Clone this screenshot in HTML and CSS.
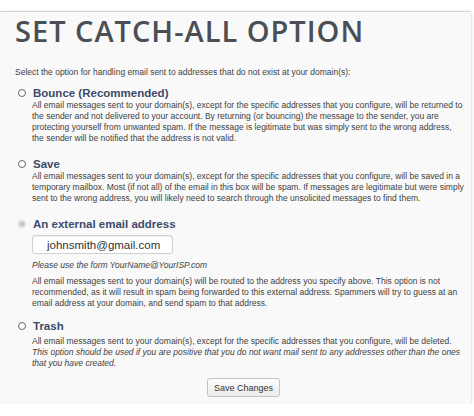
FILE: index.html
```html
<!DOCTYPE html>
<html lang="en">
<head>
<meta charset="utf-8">
<title>Set Catch-All Option</title>
<link rel="stylesheet" href="styles.css">
</head>
<body>
<div class="panel">
  <h1 class="title">SET CATCH-ALL OPTION</h1>
  <p class="intro">Select the option for handling email sent to addresses that do not exist at your domain(s):</p>

  <div class="option option-bounce">
    <label class="option-head"><input type="radio" name="catchall" class="radio"><span>Bounce (Recommended)</span></label>
    <p class="desc">All email messages sent to your domain(s), except for the specific addresses that you configure, will be returned to the sender and not delivered to your account. By returning (or bouncing) the message to the sender, you are protecting yourself from unwanted spam. If the message is legitimate but was simply sent to the wrong address, the sender will be notified that the address is not valid.</p>
  </div>

  <div class="option option-save">
    <label class="option-head"><input type="radio" name="catchall" class="radio"><span>Save</span></label>
    <p class="desc">All email messages sent to your domain(s), except for the specific addresses that you configure, will be saved in a temporary mailbox. Most (if not all) of the email in this box will be spam. If messages are legitimate but were simply sent to the wrong address, you will likely need to search through the unsolicited messages to find them.</p>
  </div>

  <div class="option option-external">
    <label class="option-head"><input type="radio" name="catchall" class="radio radio-muted" checked><span>An external email address</span></label>
    <div class="field-wrap"><input type="text" class="field" value="johnsmith@gmail.com"></div>
    <p class="hint">Please use the form YourName@YourISP.com</p>
    <p class="desc">All email messages sent to your domain(s) will be routed to the address you specify above. This option is not recommended, as it will result in spam being forwarded to this external address. Spammers will try to guess at an email address at your domain, and send spam to that address.</p>
  </div>

  <div class="option option-trash">
    <label class="option-head"><input type="radio" name="catchall" class="radio"><span>Trash</span></label>
    <p class="desc">All email messages sent to your domain(s), except for the specific addresses that you configure, will be deleted. <em>This option should be used if you are positive that you do not want mail sent to any addresses other than the ones that you have created.</em></p>
  </div>

  <div class="actions"><button type="button" class="btn">Save Changes</button></div>
</div>
</body>
</html>
```

FILE: styles.css
```css
html, body {
  margin: 0;
  padding: 0;
  background: #ffffff;
}

body {
  font-family: "Liberation Sans", Arial, sans-serif;
  color: #424242;
  padding-top: 11px;
}

.panel {
  width: 471px;
  height: 393px;
  box-sizing: border-box;
  background: #f9f9f9;
  border-top: 1px solid #d6d6d6;
  box-shadow: 0 1px 3px rgba(0, 0, 0, 0.22);
  padding: 2px 6px 0 15px;
}

.title {
  margin: 0;
  font-family: "Open Sans", sans-serif;
  font-weight: 600;
  font-size: 29px;
  line-height: 34px;
  letter-spacing: 1px;
  color: #4a4f55;
}

.intro {
  margin: 19px 0 0;
  font-size: 8.5px;
  line-height: 11px;
}

.option-bounce { margin-top: 8px; }
.option-save { margin-top: 13px; }
.option-external { margin-top: 13px; }
.option-trash { margin-top: 10px; }

.option-head {
  display: flex;
  align-items: center;
  gap: 7px;
  padding-left: 3px;
  font-size: 11.5px;
  font-weight: bold;
  color: #3d4a6b;
  line-height: 14px;
}

.radio {
  appearance: none;
  -webkit-appearance: none;
  margin: 0;
  width: 8px;
  height: 8px;
  border: 1px solid #666;
  border-radius: 50%;
  background: #fff;
  box-sizing: border-box;
}

.radio-muted {
  border-color: #cfcfcf;
  background: radial-gradient(circle, #c4c4c4 0 1.8px, #e8e8e8 2.3px);
}

.desc {
  margin: 0 0 0 17px;
  font-size: 8.5px;
  line-height: 11px;
}

.option-trash .desc {
  margin-top: 3px;
}

.field-wrap {
  margin: 4px 0 0 17px;
}

.field {
  display: block;
  width: 141px;
  height: 19px;
  box-sizing: border-box;
  border: 1px solid #cfcfcf;
  border-radius: 3px;
  background: #fff;
  box-shadow: inset 0 1px 1px rgba(0, 0, 0, 0.08);
  padding: 0 0 0 14px;
  font-family: "Liberation Sans", Arial, sans-serif;
  font-size: 11.5px;
  color: #333;
}

.hint {
  margin: 6px 0 0 17px;
  font-size: 8.5px;
  font-style: italic;
  line-height: 11px;
}

.hint + .desc {
  margin-top: 5px;
}

.actions {
  display: flex;
  justify-content: center;
  padding-left: 7px;
  margin-top: 9px;
}

.btn {
  height: 19px;
  padding: 0 6px;
  border: 1px solid #c4c4c4;
  border-radius: 3px;
  background: linear-gradient(#fdfdfd, #ececec);
  font-family: "Liberation Sans", Arial, sans-serif;
  font-size: 9px;
  color: #333;
}
```
